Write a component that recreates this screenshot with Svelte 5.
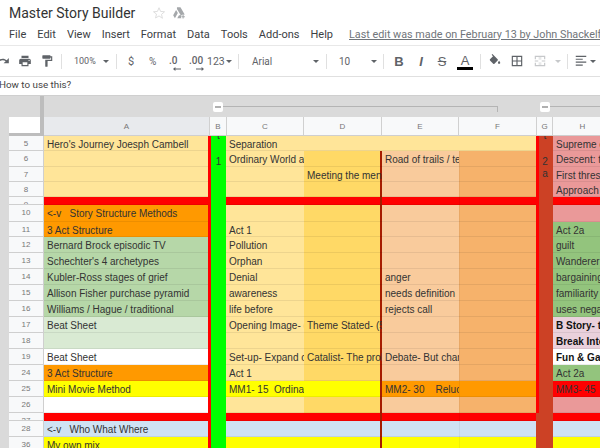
<script>
  const menu = ["File", "Edit", "View", "Insert", "Format", "Data", "Tools", "Add-ons", "Help"];

  const Y = "#ffe599", D = "#ffd966", P = "#f9cb9c", F = "#f6b26b";
  const orange = "#ff9900", yellow = "#ffff00", red = "#ff0000", rose = "#ea9999";
  const green = "#b6d7a8", pale = "#d9ead3", leaf = "#93c47d", pink = "#ead1dc", blue = "#cfe2f3";

  // a = column A, hx = column H, bg = [A, C, D, E, F, H]
  const rows = [
    { n: 5, h: 15, a: "Hero's Journey Joesph Cambell", c: "Separation", hx: "Supreme ordeal", bg: [Y, Y, Y, Y, Y, rose], merged: true },
    { n: 6, h: 16, c: "Ordinary World and", e: "Road of trails / tests", hx: "Descent: to the", bg: [Y, Y, D, P, F, rose] },
    { n: 7, h: 15, d: "Meeting the mentor", hx: "First threshold", bg: [Y, Y, D, P, F, rose] },
    { n: 8, h: 15, hx: "Approach", bg: [Y, Y, D, P, F, rose] },
    { n: 9, h: 8, bg: [red, red, red, red, red, red] },
    { n: 10, h: 17, a: "<-v   Story Structure Methods", bg: [orange, Y, D, P, F, rose] },
    { n: 11, h: 15, a: "3 Act Structure", c: "Act 1", hx: "Act 2a", bg: [orange, Y, D, P, F, leaf] },
    { n: 12, h: 16, a: "Bernard Brock episodic TV", c: "Pollution", hx: "guilt", bg: [green, Y, D, P, F, leaf] },
    { n: 13, h: 16, a: "Schechter's 4 archetypes", c: "Orphan", hx: "Wanderer", bg: [green, Y, D, P, F, leaf] },
    { n: 14, h: 16, a: "Kubler-Ross stages of grief", c: "Denial", e: "anger", hx: "bargaining", bg: [green, Y, D, P, F, leaf] },
    { n: 15, h: 16, a: "Allison Fisher purchase pyramid", c: "awareness", e: "needs definition", hx: "familiarity", bg: [green, Y, D, P, F, leaf] },
    { n: 16, h: 16, a: "Williams / Hague / traditional", c: "life before", e: "rejects call", hx: "uses negative", bg: [green, Y, D, P, F, leaf] },
    { n: 17, h: 16, a: "Beat Sheet", c: "Opening Image- (1)", d: "Theme Stated- (5)", hx: "B Story- the", bg: [pale, Y, D, P, F, pink], bold: true },
    { n: 18, h: 16, hx: "Break Into 2", bg: [pale, Y, D, P, F, pink], bold: true },
    { n: 19, h: 16, a: "Beat Sheet", c: "Set-up- Expand on", d: "Catalist- The problem", e: "Debate- But change", hx: "Fun & Games", bg: ["#ffffff", Y, D, P, F, "#ffffff"], bold: true },
    { n: 24, h: 16, a: "3 Act Structure", c: "Act 1", hx: "Act 2a", bg: [orange, Y, D, P, F, leaf] },
    { n: 25, h: 16, a: "Mini Movie Method", c: "MM1- 15  Ordinary", e: "MM2- 30    Reluctant", hx: "MM3- 45", bg: [yellow, yellow, yellow, orange, orange, red] },
    { n: 26, h: 16, bg: ["#ffffff", Y, D, P, F, rose] },
    { n: 27, h: 8, bg: [red, red, red, red, red, red] },
    { n: 28, h: 16, a: "<-v   Who What Where", bg: [blue, blue, blue, blue, blue, blue] },
    { n: 36, h: 16, a: "My own mix", bg: [yellow, yellow, yellow, yellow, yellow, yellow] }
  ];

  const heights = rows.map((r) => r.h + "px").join(" ");
  const heads = ["A", "B", "C", "D", "E", "F", "G", "H"];
</script>

<div class="page">
  <div class="title">
    <span class="name">Master Story Builder</span>
    <svg class="star" viewBox="0 0 24 24"><path d="M12 3l2.700 6.300 6.800.6-5.200 4.500 1.600 6.700L12 17l-5.900 3.600 1.600-6.700L2.500 9.900l6.800-.6z" fill="none" stroke="#dcdcdc" stroke-width="1.600"/></svg>
    <svg class="drive" viewBox="0 0 24 24"><path d="M8.500 2h6l7 12-1 2h-5.500L8.500 5zM7 7l3 5-5 9-3-5zM9 21l3-5h4v5z" fill="#a5a8ab"/><path d="M19 15v7M15.500 18.500h7" stroke="#fff" stroke-width="4"/><path d="M19 15.500v6M16 18.500h6" stroke="#a5a8ab" stroke-width="1.800"/></svg>
  </div>

  <div class="menu">
    {#each menu as item}
      <span>{item}</span>
    {/each}
    <span class="lastedit">Last edit was made on February 13 by John Shackelford</span>
  </div>

  <div class="toolbar">
    <svg class="ic redo" viewBox="0 0 24 24"><path d="M18.400 10.600C16.550 8.990 14.150 8 11.500 8c-4.650 0-8.580 3.030-9.960 7.220L3.900 16c1.050-3.190 4.050-5.500 7.600-5.500 1.950 0 3.730.72 5.120 1.880L13 16h9V7l-3.600 3.600z"/></svg>
    <svg class="ic print" viewBox="0 0 24 24"><path d="M19 8H5c-1.660 0-3 1.340-3 3v6h4v4h12v-4h4v-6c0-1.660-1.340-3-3-3zm-3 11H8v-5h8v5zm3-7c-.55 0-1-.45-1-1s.45-1 1-1 1 .45 1 1-.45 1-1 1zm-1-9H6v4h12V3z"/></svg>
    <svg class="ic paint" viewBox="0 0 24 24"><path d="M18 4V3c0-.55-.45-1-1-1H5c-.55 0-1 .45-1 1v4c0 .55.45 1 1 1h12c.55 0 1-.45 1-1V6h1v4H9v11c0 .55.45 1 1 1h2c.55 0 1-.45 1-1v-9h8V4h-3z"/></svg>
    <i class="sep s1"></i>
    <span class="lbl zoom">100%</span>
    <i class="caret c1"></i>
    <i class="sep s2"></i>
    <span class="lbl dollar">$</span>
    <span class="lbl pct">%</span>
    <span class="dec d0">.0<svg viewBox="0 0 10 5"><path d="M0 2.500L3 0v2h7v1H3v2z"/></svg></span>
    <span class="dec d00">.00<svg viewBox="0 0 10 5"><path d="M10 2.500L7 0v2H0v1h7v2z"/></svg></span>
    <span class="lbl n123">123</span>
    <i class="caret c2"></i>
    <i class="sep s3"></i>
    <span class="lbl font">Arial</span>
    <i class="caret c3"></i>
    <i class="sep s4"></i>
    <span class="lbl size">10</span>
    <i class="caret c4"></i>
    <i class="sep s5"></i>
    <span class="fmt b">B</span>
    <span class="fmt it">I</span>
    <span class="fmt st">S</span>
    <span class="fmt col">A</span>
    <i class="sep s6"></i>
    <svg class="ic fill" viewBox="0 0 24 24"><path d="M16.560 8.940L7.620 0 6.210 1.410l2.380 2.380-5.150 5.150c-.59.59-.59 1.540 0 2.120l5.500 5.500c.29.29.68.44 1.060.44s.77-.15 1.060-.44l5.500-5.500c.59-.58.59-1.530 0-2.120zM19 11.500s-2 2.170-2 3.500c0 1.100.9 2 2 2s2-.9 2-2c0-1.330-2-3.500-2-3.500z"/></svg>
    <svg class="ic border" viewBox="0 0 24 24"><path d="M3 3v18h18V3H3zm8 16H5v-6h6v6zm0-8H5V5h6v6zm8 8h-6v-6h6v6zm0-8h-6V5h6v6z"/></svg>
    <svg class="ic merge" viewBox="0 0 24 24"><path d="M3 3h18v6h-2V5H5v4H3zM3 15h2v4h14v-4h2v6H3zM3 11h6v2H3zM15 11h6v2h-6zM10 5h1v5h-1zM13 5h1v5h-1zM10 14h1v5h-1zM13 14h1v5h-1z"/></svg>
    <i class="caret c5"></i>
    <i class="sep s7"></i>
    <svg class="ic align" viewBox="0 0 24 24"><path d="M3 3h18v2H3zM3 8h12v2H3zM3 13h18v2H3zM3 18h12v2H3z"/></svg>
    <i class="caret c6"></i>
  </div>

  <div class="formula">How to use this?</div>

  <div class="sheet">
    <div class="groups">
      <div class="frozen"></div>
      <div class="grp one"><b class="minus"></b><i class="line"></i></div>
      <div class="grp two"><b class="minus"></b><i class="line"></i></div>
    </div>

    <div class="heads">
      <div class="corner"></div>
      {#each heads as h}
        <div class="colhead col-{h}">{h}</div>
      {/each}
    </div>

    <div class="grid" style="grid-template-rows: {heights}">
      {#each rows as r, i}
        <div class="rowhead" style="grid-row: {i + 1}">{r.n}</div>
        <div class="cell ca" style="grid-row: {i + 1}; background: {r.bg[0]}">{r.a ?? ""}</div>
        {#if r.merged}
          <div class="cell cm" style="grid-row: {i + 1}; background: {r.bg[1]}">{r.c}</div>
        {:else}
          <div class="cell cc" style="grid-row: {i + 1}; background: {r.bg[1]}">{r.c ?? ""}</div>
          <div class="cell cd" style="grid-row: {i + 1}; background: {r.bg[2]}">{r.d ?? ""}</div>
          <div class="cell ce" style="grid-row: {i + 1}; background: {r.bg[3]}">{r.e ?? ""}</div>
          <div class="cell cf" style="grid-row: {i + 1}; background: {r.bg[4]}"></div>
        {/if}
        <div class="cell ch" class:bold={r.bold} style="grid-row: {i + 1}; background: {r.bg[5]}">{r.hx ?? ""}</div>
      {/each}
      <div class="band bandb"><span>t</span><span class="gap"></span><span>1</span></div>
      <div class="band bandg"><span>t</span><span class="gap"></span><span>2</span><span>a</span></div>
    </div>
  </div>
</div>

<style>
  :global(body) {
    margin: 0;
    background: #fff;
  }
  .page {
    width: 600px;
    height: 448px;
    overflow: hidden;
    display: flex;
    flex-direction: column;
    font-family: "Liberation Sans", Arial, sans-serif;
    color: #333;
  }
  .title {
    height: 26px;
    display: flex;
    align-items: center;
    flex: none;
  }
  .name {
    margin-left: 9px;
    font: 14px Roboto, sans-serif;
    color: #333;
    width: 142px;
    white-space: nowrap;
  }
  .star {
    width: 14px;
    height: 14px;
    margin-left: 1px;
  }
  .drive {
    width: 14px;
    height: 14px;
    margin-left: 6px;
  }
  .menu {
    height: 16px;
    padding-bottom: 3px;
    flex: none;
    display: flex;
    align-items: center;
    gap: 11px;
    padding-left: 9px;
    font: 11px Roboto, sans-serif;
    color: #3c4043;
    border-bottom: 1px solid #e8e8e8;
    white-space: nowrap;
  }
  .lastedit {
    margin-left: 5px;
    font-size: 10.8px;
    color: #70757a;
    text-decoration: underline;
  }

  .toolbar {
    height: 30px;
    flex: none;
    display: flex;
    align-items: center;
    border-bottom: 1px solid #e0e0e0;
    font: 10px Roboto, sans-serif;
    color: #5f6368;
    white-space: nowrap;
  }
  .toolbar > * {
    flex: none;
  }
  .ic {
    width: 14px;
    height: 14px;
    fill: #5f6368;
  }
  .sep {
    width: 1px;
    height: 15px;
    background: #e0e0e0;
  }
  .caret {
    width: 0;
    height: 0;
    border-left: 3px solid transparent;
    border-right: 3px solid transparent;
    border-top: 3px solid #5f6368;
  }
  .redo { margin-left: -4px; }
  .print { margin-left: 8px; }
  .paint { margin-left: 8px; }
  .s1 { margin-left: 7px; }
  .zoom { margin-left: 12px; width: 19px; font-size: 9px; }
  .c1 { margin-left: 10px; }
  .s2 { margin-left: 7px; }
  .dollar { margin-left: 11px; width: 7px; font-size: 11px; }
  .pct { margin-left: 14px; width: 9px; }
  .dec {
    position: relative;
    top: -1px;
    font-weight: 500;
  }
  .dec svg {
    position: absolute;
    width: 8px;
    height: 4px;
    top: 12px;
    fill: #5f6368;
  }
  .d0 { margin-left: 11px; width: 13px; }
  .d0 svg { left: 4px; }
  .d00 { margin-left: 7px; width: 15px; }
  .d00 svg { left: 7px; }
  .n123 { margin-left: 3px; width: 18px; font-size: 10.5px; }
  .c2 { margin-left: 1px; }
  .s3 { margin-left: 6px; }
  .font { margin-left: 13px; width: 61px; }
  .c3 { margin-left: 0; }
  .s4 { margin-left: 7px; }
  .size { margin-left: 12px; width: 32px; }
  .c4 { margin-left: 0; }
  .s5 { margin-left: 6px; }
  .fmt {
    font: 13px "Liberation Sans", Arial, sans-serif;
    color: #5f6368;
    text-align: center;
  }
  .b { margin-left: 9px; width: 12px; font-weight: 700; }
  .it { margin-left: 11px; width: 10px; font-style: italic; font-weight: 700; }
  .st { margin-left: 10px; width: 12px; text-decoration: line-through; }
  .col {
    margin-left: 9px;
    width: 16px;
    border-bottom: 3px solid #000;
    line-height: 13px;
    font-weight: 400;
    position: relative;
    top: 1px;
  }
  .s6 { margin-left: 7px; }
  .fill { margin-left: 7px; }
  .border { margin-left: 8px; }
  .merge { margin-left: 9px; fill: #c6c8ca; }
  .c5 { margin-left: 8px; border-top-color: #c6c8ca; }
  .s7 { margin-left: 6px; }
  .align { margin-left: 6px; }
  .c6 { margin-left: 2px; }

  .formula {
    height: 15px;
    padding-bottom: 3px;
    flex: none;
    display: flex;
    align-items: center;
    margin-left: -1px;
    font: 9.8px Roboto, sans-serif;
    color: #444;
  }

  .sheet {
    flex: 1;
    min-height: 0;
    padding-left: 9px;
    background: #dadada;
    border-top: 1px solid #cfcfcf;
    overflow: hidden;
  }
  .groups {
    height: 21px;
    display: flex;
  }
  .frozen {
    width: 31px;
    border-right: 4px solid #bdbdbd;
    flex: none;
  }
  .grp {
    position: relative;
    flex: none;
    display: flex;
    align-items: center;
  }
  .one {
    margin-left: 169px;
    width: 285px;
  }
  .two {
    margin-left: 42px;
    flex: 1;
  }
  .minus {
    flex: none;
    width: 10px;
    height: 10px;
    background: #fff;
    border-radius: 2px;
    position: relative;
  }
  .minus::after {
    content: "";
    position: absolute;
    left: 2px;
    right: 2px;
    top: 4px;
    height: 2px;
    background: #b0b0b0;
  }
  .line {
    flex: 1;
    height: 1px;
    background: #b4b4b4;
  }
  .one .line {
    height: 5px;
    background: none;
    border-top: 1px solid #b4b4b4;
    border-right: 1px solid #b4b4b4;
    align-self: center;
    margin-top: 5px;
  }
  .heads {
    height: 19px;
    display: flex;
  }
  .corner {
    width: 31px;
    flex: none;
    box-sizing: border-box;
    background: #fff;
    border-bottom: 3px solid #bdbdbd;
    box-shadow: 4px 0 0 #bdbdbd;
  }
  .colhead {
    flex: none;
    box-sizing: border-box;
    background: #f8f9fa;
    border-right: 1px solid #d0d0d0;
    border-bottom: 1px solid #cfcfcf;
    font-size: 8px;
    color: #777;
    display: flex;
    align-items: center;
    justify-content: center;
  }
  .col-A { margin-left: 4px; width: 166px; background: #e8eaed; }
  .col-B { width: 17px; }
  .col-C { width: 77px; }
  .col-D { width: 78px; }
  .col-E { width: 77px; }
  .col-F { width: 78px; }
  .col-G { width: 16px; }
  .col-H { width: 60px; }

  .grid {
    display: grid;
    grid-template-columns: 35px 164px 18px 78px 78px 77px 77px 17px 60px;
  }
  .rowhead {
    grid-column: 1;
    box-sizing: border-box;
    background: #f8f9fa;
    border-right: 1px solid #cfcfcf;
    border-bottom: 1px solid #cfcfcf;
    font-size: 8px;
    line-height: 15px;
    color: #777;
    text-align: center;
    overflow: hidden;
  }
  .cell {
    box-sizing: border-box;
    padding-left: 3px;
    font-size: 10px;
    line-height: 18px;
    color: #333;
    white-space: pre;
    overflow: hidden;
    box-shadow: inset 0 -1px 0 rgba(0, 0, 0, 0.07);
  }
  .ca { grid-column: 2; }
  .cc { grid-column: 4; }
  .cd { grid-column: 5; box-shadow: inset 0 -1px 0 rgba(0, 0, 0, 0.07), inset -2px 0 0 #a61c00; }
  .ce { grid-column: 6; }
  .cf { grid-column: 7; box-shadow: inset 0 -1px 0 rgba(0, 0, 0, 0.07), inset 1px 0 0 rgba(0, 0, 0, 0.05); }
  .cm { grid-column: 4 / 8; }
  .ch { grid-column: 9; }
  .bold {
    font-weight: 700;
    color: #111;
  }
  .band {
    grid-row: 1 / -1;
    box-sizing: border-box;
    display: flex;
    flex-direction: column;
    align-items: center;
    overflow: hidden;
    font-size: 10px;
    line-height: 12.5px;
    color: #333;
  }
  .band span {
    display: block;
    height: 12.5px;
    flex: none;
  }
  .band span:first-child {
    margin-top: -6px;
  }
  .band .gap {
    height: 13px;
  }
  .bandb {
    grid-column: 3;
    background: #00ff00;
    border-left: 3px solid #ff0000;
  }
  .bandg {
    grid-column: 8;
    padding-left: 1px;
    background: linear-gradient(to right, #ff0000 3px, transparent 3px) 0 0 / 100% 277px no-repeat, #cc4125;
  }
</style>
